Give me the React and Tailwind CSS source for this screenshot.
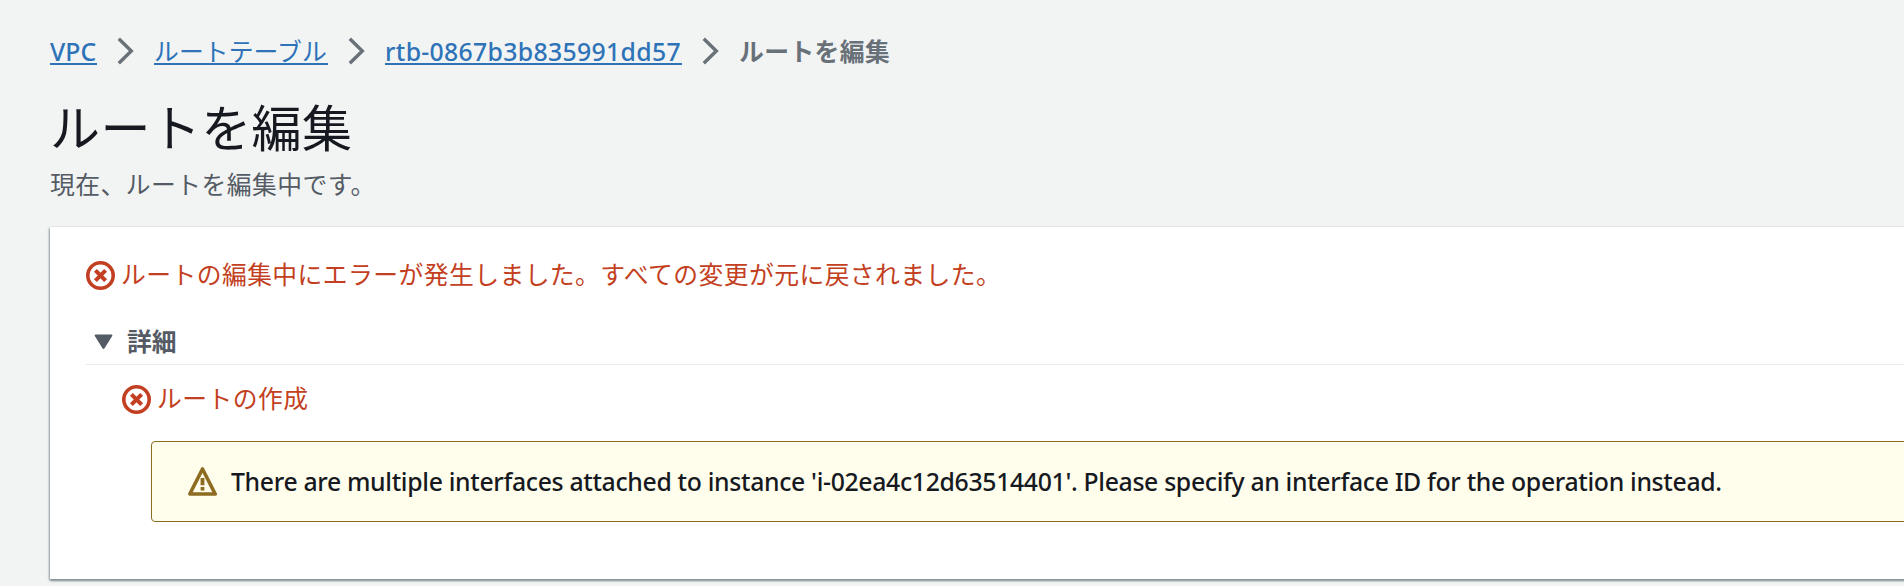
const Chevron = () => (
  <svg className="h-7 w-[17px] shrink-0" viewBox="0 0 17 28" fill="none" stroke="#687078" strokeWidth="3.4">
    <path d="M1.8 1.8 L14.3 14 L1.8 26.2" />
  </svg>
);

const ErrorIcon = () => (
  <svg className="size-[29px] shrink-0" viewBox="0 0 29 29" fill="none" stroke="#c33f22">
    <circle cx="14.5" cy="14.5" r="12.7" strokeWidth="3.6" />
    <path d="M9.4 9.4 L19.6 19.6 M19.6 9.4 L9.4 19.6" strokeWidth="4.1" />
  </svg>
);

const WarningIcon = () => (
  <svg className="size-[29px] shrink-0" viewBox="0 0 29 29" fill="none" stroke="#8d6b20">
    <path d="M14.5 2 L27.2 27 H1.8 Z" strokeWidth="3.6" strokeLinejoin="round" />
    <path d="M14.5 11 V18.2 M14.5 20 V23.6" strokeWidth="3.8" />
  </svg>
);

const Link = ({ children, className }) => (
  <a href="#" className={`block h-[28px] whitespace-nowrap border-b-2 border-[#2e73b8] leading-[28px] text-[#2e73b8] ${className}`}>
    {children}
  </a>
);

export default function App() {
  return (
    <div className="h-[586px] overflow-hidden bg-[#f2f4f4] pl-[50px] pt-9 font-['Noto_Sans','Noto_Sans_CJK_JP',sans-serif] text-[24.8px] text-[#16191f]">
      <nav className="flex h-[30px] items-center gap-5">
        <Link className="w-[47px] font-medium">VPC</Link>
        <Chevron />
        <Link className="w-[174px] tracking-[0.1px]">ルートテーブル</Link>
        <Chevron />
        <Link className="w-[297px] font-medium tracking-[0.32px]">rtb-0867b3b835991dd57</Link>
        <Chevron />
        <span className="whitespace-nowrap font-bold leading-[28px] tracking-[0.4px] text-[#687078]">ルートを編集</span>
      </nav>

      <header className="pt-8">
        <h1 className="h-[60px] text-[50px] leading-[60px] tracking-[0.4px]">ルートを編集</h1>
        <p className="mt-2 h-9 leading-9 tracking-[0.45px] text-[#545b64]">現在、ルートを編集中です。</p>
      </header>

      <main className="mt-[25px] h-[352px] w-[1900px] bg-white pl-9 pt-[30px] shadow-[0_2px_2px_0_#879196,-1px_1px_2px_0_#a5adb0,0_-1px_0_0_#eaeaea]">
        <div className="flex h-9 items-center gap-1.5 text-[#c33f22]">
          <ErrorIcon />
          <span className="tracking-[0.43px]">ルートの編集中にエラーが発生しました。すべての変更が元に戻されました。</span>
        </div>

        <section>
          <h2 className="mt-[26px] flex h-[46px] items-center border-b border-[#eaeaea] pl-2 font-bold text-[#545b64]">
            <svg className="mr-[14px] h-4 w-[19px]" viewBox="0 0 19 16" fill="#545b64">
              <path d="M1.5 .5 H17.5 Q19 .8 18.2 2 L10.7 14 Q9.5 16 8.3 14 L.8 2 Q0 .8 1.5 .5 Z" />
            </svg>
            詳細
          </h2>
          <div className="mt-4 flex h-9 items-center gap-1.5 pl-9 text-[#c33f22]">
            <ErrorIcon />
            <span className="tracking-[0.45px]">ルートの作成</span>
          </div>
          <div className="ml-[65px] mt-6 flex h-[81px] items-center gap-[14px] rounded border border-[#8d6b20] bg-[#fffeec] pl-9">
            <WarningIcon />
            <span className="whitespace-nowrap font-medium tracking-[-0.33px]">
              There are multiple interfaces attached to instance 'i-02ea4c12d63514401'. Please specify an interface ID for the operation instead.
            </span>
          </div>
        </section>
      </main>
    </div>
  );
}
